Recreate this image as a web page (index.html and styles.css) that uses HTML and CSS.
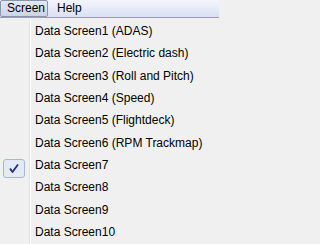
FILE: index.html
```html
<!DOCTYPE html>
<html>
<head>
<meta charset="utf-8">
<link rel="stylesheet" href="styles.css">
</head>
<body>
<div class="menubar">
  <div class="top-item active">Screen</div>
  <div class="top-item">Help</div>
</div>
<div class="dropdown">
  <div class="row"><span class="gutter"></span><span class="label">Data Screen1 (ADAS)</span></div>
  <div class="row"><span class="gutter"></span><span class="label">Data Screen2 (Electric dash)</span></div>
  <div class="row"><span class="gutter"></span><span class="label">Data Screen3 (Roll and Pitch)</span></div>
  <div class="row"><span class="gutter"></span><span class="label">Data Screen4 (Speed)</span></div>
  <div class="row"><span class="gutter"></span><span class="label">Data Screen5 (Flightdeck)</span></div>
  <div class="row"><span class="gutter"></span><span class="label">Data Screen6 (RPM Trackmap)</span></div>
  <div class="row"><span class="gutter"><span class="check"><svg width="12" height="11" viewBox="0 0 12 11"><path d="M2 5.5 L4.5 9 L10 1.5" fill="none" stroke="#1b2a8c" stroke-width="1.8" stroke-linejoin="round"/></svg></span></span><span class="label">Data Screen7</span></div>
  <div class="row"><span class="gutter"></span><span class="label">Data Screen8</span></div>
  <div class="row"><span class="gutter"></span><span class="label">Data Screen9</span></div>
  <div class="row"><span class="gutter"></span><span class="label">Data Screen10</span></div>
</div>
</body>
</html>
```
FILE: styles.css
```css
html, body {
  margin: 0;
  padding: 0;
}
body {
  width: 219px;
  height: 244px;
  overflow: hidden;
  background: #f0f0f0;
  font-family: "Liberation Sans", Arial, sans-serif;
  font-size: 12px;
  color: #000;
}
.menubar {
  display: flex;
  align-items: flex-start;
  height: 17px;
  background: linear-gradient(#f2f5fc 0%, #e8ecf8 45%, #dbe1f2 100%);
  border-bottom: 1px solid #9a9eae;
  box-shadow: 0 1px 0 #ffffff;
}
.top-item {
  height: 15px;
  line-height: 15px;
  padding: 0 6px 0 8px;
  border: 1px solid transparent;
}
.top-item.active {
  border-color: #8a94ac;
  border-radius: 2px;
  background: linear-gradient(#e4e8f3, #cdd4e6);
  padding: 0 2px 0 6px;
}
.dropdown {
  display: flex;
  flex-direction: column;
  padding-top: 3px;
  background: #f0f0f0;
}
.row {
  display: flex;
  align-items: stretch;
  height: 22.33px;
  flex: none;
}
.gutter {
  width: 30px;
  flex: none;
  border-right: 1px solid #e2e3e3;
  box-shadow: 1px 0 0 #ffffff;
  display: flex;
  align-items: center;
  padding-left: 3px;
  box-sizing: border-box;
}
.label {
  padding-left: 5px;
  line-height: 21px;
  white-space: nowrap;
}
.check {
  width: 22px;
  height: 19px;
  margin-top: 4px;
  box-sizing: border-box;
  border: 1px solid #a9b5d6;
  border-radius: 3px;
  background: #e3e9f6;
  display: flex;
  align-items: center;
  justify-content: center;
}
```
